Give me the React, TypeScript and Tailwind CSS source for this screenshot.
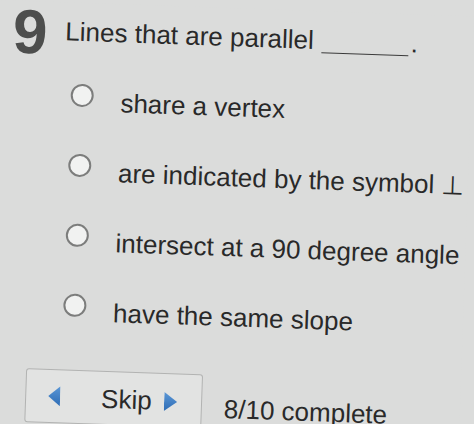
import React from "react";

const OPTIONS = [
  "share a vertex",
  "are indicated by the symbol \u22A5",
  "intersect at a 90 degree angle",
  "have the same slope",
];

function Radio() {
  return (
    <div className="w-[23px] h-[23px] shrink-0 rounded-full border-2 border-[#7c7d7c] bg-[#f1f2f1] mt-[0.5px]" />
  );
}

export default function App() {
  return (
    <div className="w-[474px] h-[424px] overflow-hidden bg-[#dbdcdb] text-[#292929] font-['Liberation_Sans',Arial,sans-serif]">
      {/* the photo is tilted a little, so the whole sheet is turned */}
      <div className="w-[474px] h-[440px] origin-top-left rotate-[2deg] bg-[#dbdcdb]">
        {/* question header */}
        <div className="flex items-start pl-[14px] h-[62px]">
          <div className="text-[62px] leading-[66px] font-bold text-[#4d4e4d] mt-[-2px]">9</div>
          <div className="ml-[18px] mt-[14px] text-[26px] leading-[30px] whitespace-nowrap">
            Lines that are parallel
            <span className="inline-block w-[87px] h-[1.5px] bg-[#3a3a3a] ml-[8px] align-[-4px]" />
            <span className="ml-[2px]">.</span>
          </div>
        </div>

        {/* answers */}
        <div className="mt-[18px] flex flex-col">
          {OPTIONS.map((o) => (
            <div key={o} className="flex items-start h-[70px] ml-[74px]">
              <Radio />
              <span className="ml-[27px] mt-[4px] text-[26px] leading-[30px] whitespace-nowrap">{o}</span>
            </div>
          ))}
        </div>

        {/* footer */}
        <div className="flex items-start mt-[7px] ml-[39px]">
          <div className="w-[177px] h-[54px] flex items-start rounded-[3px] border border-[#b2b3b2] bg-[#e2e3e2]">
            <svg width="12" height="20" viewBox="0 0 12 20" className="ml-[22px] mt-[16px] shrink-0">
              <defs>
                <linearGradient id="lt" x1="0" y1="0" x2="0" y2="1">
                  <stop offset="0" stopColor="#5b97d6" />
                  <stop offset="1" stopColor="#2d6cb5" />
                </linearGradient>
              </defs>
              <polygon points="12,0 12,20 0,10" fill="url(#lt)" />
            </svg>
            <span className="ml-[41px] mt-[12px] text-[26px] leading-[30px]">Skip</span>
            <svg width="13" height="19" viewBox="0 0 13 19" className="ml-[12px] mt-[18px] shrink-0">
              <defs>
                <linearGradient id="rt" x1="0" y1="0" x2="0" y2="1">
                  <stop offset="0" stopColor="#5b97d6" />
                  <stop offset="1" stopColor="#2d6cb5" />
                </linearGradient>
              </defs>
              <polygon points="0,0 13,9.5 0,19" fill="url(#rt)" />
            </svg>
          </div>
          <span className="ml-[22px] mt-[19px] text-[26px] leading-[30px] whitespace-nowrap">8/10 complete</span>
        </div>
      </div>
    </div>
  );
}
